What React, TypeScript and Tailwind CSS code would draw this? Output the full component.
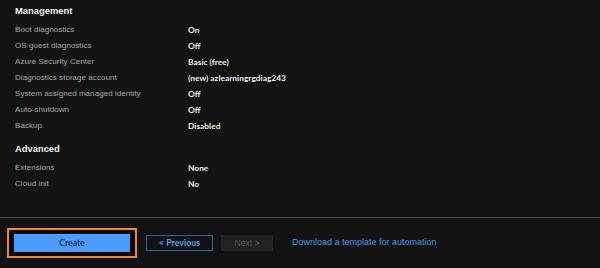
import React from "react";

const mgmt: [string, string][] = [
  ["Boot diagnostics", "On"],
  ["OS guest diagnostics", "Off"],
  ["Azure Security Center", "Basic (free)"],
  ["Diagnostics storage account", "(new) azlearningrgdiag243"],
  ["System assigned managed identity", "Off"],
  ["Auto-shutdown", "Off"],
  ["Backup", "Disabled"],
];

const adv: [string, string][] = [
  ["Extensions", "None"],
  ["Cloud init", "No"],
];

function Row({ label, value }: { label: string; value: string }) {
  return (
    <div className="flex items-center h-[16px]">
      <div className="w-[173px] text-[8.1px] text-[#a6a6a6]">{label}</div>
      <div
        className="text-[8.4px] text-[#ededed] font-bold"
        style={{ fontFamily: 'Lato, "Liberation Sans", sans-serif' }}
      >
        {value}
      </div>
    </div>
  );
}

export default function App() {
  return (
    <div
      className="w-[600px] h-[268px] bg-[#131313] flex flex-col overflow-hidden"
      style={{ fontFamily: '"Liberation Sans", Arial, sans-serif' }}
    >
      <div className="h-[217px] pl-[15px]">
        <div className="h-[22px] flex items-center text-[9.4px] font-bold text-[#f2f2f2]">
          Management
        </div>
        {mgmt.map(([l, v]) => (
          <Row key={l} label={l} value={v} />
        ))}
        <div className="mt-[4px] h-[22px] flex items-center text-[9.4px] font-bold text-[#f2f2f2]">
          Advanced
        </div>
        {adv.map(([l, v]) => (
          <Row key={l} label={l} value={v} />
        ))}
      </div>
      <div className="h-px bg-[#4c4c4c]" />
      <div className="flex items-start pl-[7px] pt-[10px]">
        <div className="border-2 border-[#ef8a2f] bg-[#080808] px-[5px] py-[4px]">
          <div
            className="w-[116px] h-[18px] bg-[#4a9cf8] flex items-center justify-center text-[8.6px] font-bold text-[#163266]"
            style={{ fontFamily: 'Lato, "Liberation Sans", sans-serif' }}
          >
            Create
          </div>
        </div>
        <div
          className="ml-[9px] mt-[7px] w-[67px] h-[16px] border border-[#2e63b0] flex items-center justify-center text-[8.8px] font-bold text-[#5d9eea]"
          style={{ fontFamily: 'Lato, "Liberation Sans", sans-serif' }}
        >
          &lt; Previous
        </div>
        <div className="ml-[8px] mt-[7px] w-[52px] h-[16px] bg-[#222222] flex items-center justify-center text-[8.5px] text-[#595959]">
          Next &gt;
        </div>
        <div className="ml-[19px] mt-[7px] h-[16px] flex items-center text-[9px] text-[#4f92e3]">
          Download a template for automation
        </div>
      </div>
    </div>
  );
}
